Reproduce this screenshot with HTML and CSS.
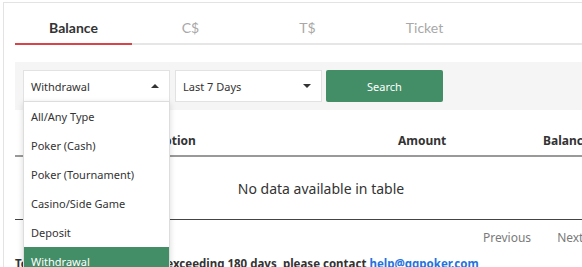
FILE: index.html
```html
<!DOCTYPE html>
<html lang="en">
<head>
    <meta charset="UTF-8">
    <meta name="viewport" content="width=device-width, initial-scale=1.0">
    <title>Transaction History</title>
    <link rel="stylesheet" href="styles.css">
</head>
<body>
    <div class="card">
        <ul class="tabs">
            <li class="tab active">Balance</li>
            <li class="tab">C$</li>
            <li class="tab">T$</li>
            <li class="tab">Ticket</li>
        </ul>

        <div class="filter-bar">
            <div class="select-wrap">
                <div class="select open">
                    <span>Withdrawal</span>
                    <span class="caret up"></span>
                </div>
                <ul class="dropdown">
                    <li>All/Any Type</li>
                    <li>Poker (Cash)</li>
                    <li>Poker (Tournament)</li>
                    <li>Casino/Side Game</li>
                    <li>Deposit</li>
                    <li class="selected">Withdrawal</li>
                </ul>
            </div>
            <div class="select">
                <span>Last 7 Days</span>
                <span class="caret"></span>
            </div>
            <button class="search-btn">Search</button>
        </div>

        <table class="history">
            <thead>
                <tr>
                    <th class="col-date">Date</th>
                    <th class="col-desc">Description</th>
                    <th class="col-amount">Amount</th>
                    <th class="col-balance">Balance</th>
                </tr>
            </thead>
            <tbody>
                <tr>
                    <td colspan="4" class="empty">No data available in table</td>
                </tr>
            </tbody>
        </table>

        <div class="pager">
            <span>Previous</span>
            <span>Next</span>
        </div>

        <p class="note">To view your older history exceeding 180 days, please contact <a href="#">help@ggpoker.com</a></p>
    </div>
</body>
</html>
```

FILE: styles.css
```css
body {
    margin: 0;
    font-family: "Noto Sans", sans-serif;
    font-size: 11px;
    color: #333;
    overflow: hidden;
}
.card {
    margin: 2px 0 0 3px;
    width: 640px;
    border-top: 1px solid #e3e3e3;
    border-left: 1px solid #e3e3e3;
    padding: 0 0 0 11px;
}
.tabs {
    display: flex;
    list-style: none;
    margin: 0;
    padding: 0;
    border-bottom: 2px solid #e6e6e6;
}
.tab {
    width: 117px;
    height: 42px;
    box-sizing: border-box;
    padding-top: 8px;
    margin-bottom: -2px;
    border-bottom: 2px solid transparent;
    display: flex;
    align-items: center;
    justify-content: center;
    font-family: Lato, sans-serif;
    font-size: 14px;
    color: #a8a8a8;
}
.tab.active {
    color: #333;
    font-weight: bold;
    border-bottom-color: #d9444a;
}
.filter-bar {
    margin-top: 17px;
    background-color: #f5f5f5;
    padding: 8px;
    display: flex;
    gap: 5px;
}
.select-wrap {
    position: relative;
}
.select {
    width: 147px;
    height: 32px;
    box-sizing: border-box;
    background: #fff;
    border: 1px solid #e2e2e2;
    display: flex;
    align-items: center;
    justify-content: space-between;
    padding: 0 10px 0 7px;
}
.caret {
    width: 0;
    height: 0;
    border-left: 4px solid transparent;
    border-right: 4px solid transparent;
    border-top: 4px solid #333;
}
.caret.up {
    border-top: none;
    border-bottom: 4px solid #333;
}
.search-btn {
    width: 117px;
    height: 32px;
    margin-left: -1px;
    background-color: #438e67;
    color: #fff;
    border: none;
    border-radius: 2px;
    font-family: "Noto Sans", sans-serif;
    font-size: 11px;
}
.dropdown {
    position: absolute;
    top: 31px;
    left: 0;
    width: 147px;
    box-sizing: border-box;
    list-style: none;
    margin: 0;
    padding: 0;
    background: #fff;
    border: 1px solid #ddd;
    box-shadow: 0 2px 6px rgba(0, 0, 0, 0.15);
    z-index: 2;
}
.dropdown li {
    height: 29px;
    line-height: 29px;
    padding-left: 7px;
}
.dropdown li.selected {
    background-color: #438e67;
    color: #fff;
}
.history {
    margin-top: 16px;
    width: 612px;
    border-collapse: collapse;
}
.history th {
    font-size: 12px;
    text-align: left;
    height: 29px;
    padding: 0;
    border-bottom: 2px solid #999;
}
.history th.col-date {
    width: 102px;
    padding-left: 10px;
}
.col-desc { width: 271px; }
.col-amount { width: 145px; }
.history td.empty {
    height: 60px;
    text-align: center;
    font-size: 14px;
    border-bottom: 1px solid #444;
}
.pager {
    display: flex;
    gap: 26px;
    padding: 9px 0 0 468px;
    font-size: 12px;
    color: #7a7a7a;
}
.note {
    margin: 10px 0 0;
    font-size: 11.5px;
    font-weight: bold;
}
.note a {
    color: #1f73e0;
    text-decoration: none;
}
```
